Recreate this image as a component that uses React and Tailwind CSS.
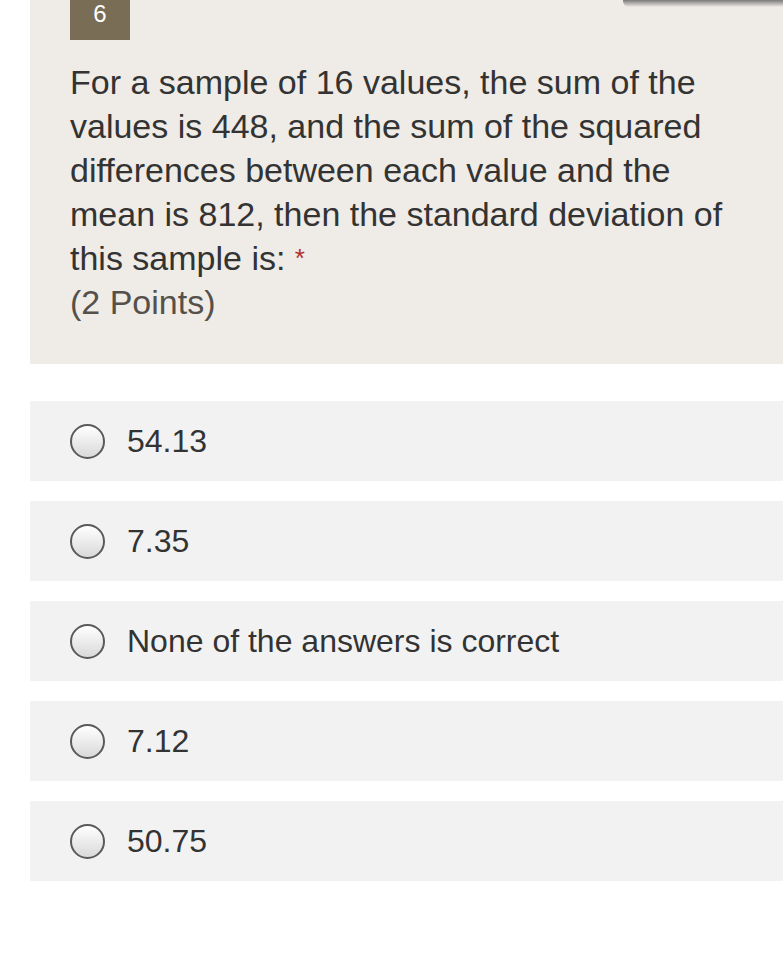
const options = ['54.13', '7.35', 'None of the answers is correct', '7.12', '50.75'];

function Radio() {
  return (
    <span className="block w-[35px] h-[35px] rounded-full border-2 border-[#5a5a5a] bg-gradient-to-b from-[#ffffff] to-[#d9d9d9] shrink-0" />
  );
}

export default function App() {
  return (
    <div className="relative w-[783px] h-[956px] bg-white overflow-hidden font-['Liberation_Sans',Arial,sans-serif] text-[#333]">
      <div className="absolute top-0 right-0 w-[160px] h-[7px] bg-gradient-to-b from-[#7a7a7a] to-transparent rounded-bl-[6px]" />
      <div className="ml-[30px] bg-[#efebe6] h-[364px] pl-[40px] pr-4">
        <div className="w-[60px] h-[40px] bg-[#7a6d55] text-white text-[24px] leading-[28px] text-center">6</div>
        <p className="mt-[20px] text-[34px] leading-[44px] text-[#333] whitespace-nowrap">
          For a sample of 16 values, the sum of the
          <br />
          values is 448, and the sum of the squared
          <br />
          differences between each value and the
          <br />
          mean is 812, then the standard deviation of
          <br />
          this sample is: <span className="text-[#b0302a] text-[26px] align-top">*</span>
        </p>
        <p className="text-[34px] leading-[44px] text-[#55504a]">(2 Points)</p>
      </div>
      <div className="mt-[37px] ml-[30px] flex flex-col gap-[20px]">
        {options.map((o) => (
          <div key={o} className="h-[80px] bg-[#f2f2f2] flex items-center pl-[40px] gap-[22px]">
            <Radio />
            <span className="text-[32px] text-[#333]">{o}</span>
          </div>
        ))}
      </div>
    </div>
  );
}
